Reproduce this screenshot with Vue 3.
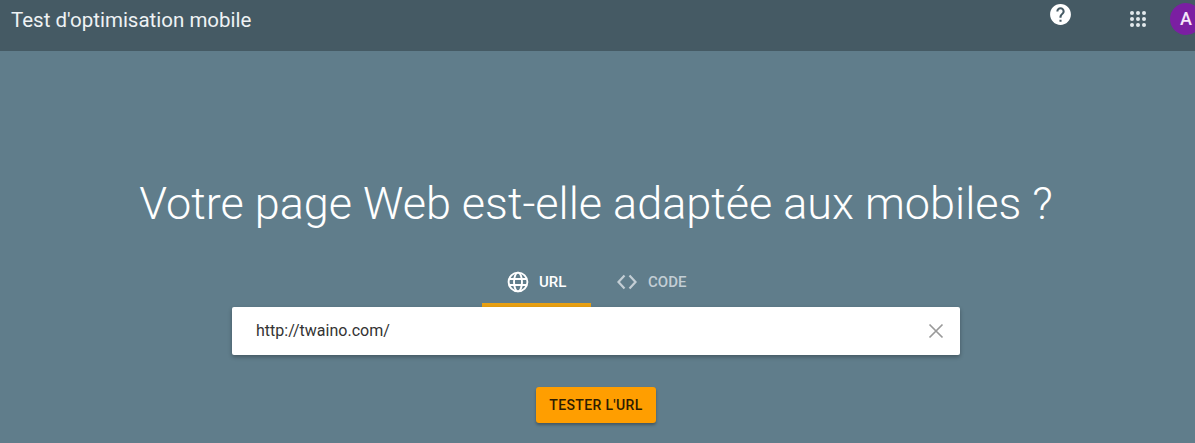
<template>
  <div class="page">
    <header class="topbar">
      <span class="app-title">Test d'optimisation mobile</span>
      <div class="topbar-actions">
        <svg class="help" width="25" height="25" viewBox="0 0 24 24">
          <path fill="#fff" d="M12 2C6.48 2 2 6.48 2 12s4.48 10 10 10 10-4.48 10-10S17.52 2 12 2zm1 17h-2v-2h2v2zm2.07-7.75l-.9.92C13.45 12.9 13 13.5 13 15h-2v-.5c0-1.1.45-2.1 1.17-2.83l1.24-1.26c.37-.36.59-.86.59-1.41 0-1.1-.9-2-2-2s-2 .9-2 2H8c0-2.21 1.79-4 4-4s4 1.79 4 4c0 .88-.36 1.68-.93 2.25z" />
        </svg>
        <div class="apps">
          <i v-for="n in 9" :key="n"></i>
        </div>
        <div class="avatar">A</div>
      </div>
    </header>

    <main class="hero">
      <h1>Votre page Web est-elle adaptée aux mobiles ?</h1>

      <div class="tabs">
        <div class="tab active">
          <svg width="24" height="24" viewBox="0 0 24 24" fill="none" stroke="#fff" stroke-width="1.9">
            <circle cx="12" cy="12" r="9.4" />
            <ellipse cx="12" cy="12" rx="4" ry="9.4" />
            <path d="M3.4 9h17.2M3.4 15h17.2" />
          </svg>
          <span>URL</span>
        </div>
        <div class="tab">
          <svg width="24" height="24" viewBox="0 0 24 24" fill="none" stroke="#c3ced5" stroke-width="2.2">
            <path d="M9.500 5.500 3.500 12l6 6.500M14.500 5.500l6 6.500-6 6.500" />
          </svg>
          <span>CODE</span>
        </div>
      </div>

      <div class="url-box">
        <span class="url">http://twaino.com/</span>
        <svg class="clear" width="16" height="16" viewBox="0 0 16 16" stroke="#9a9a9a" stroke-width="1.700">
          <path d="M1.500 1.500l13 13M14.500 1.500l-13 13" />
        </svg>
      </div>

      <button class="test-btn" type="button">TESTER L'URL</button>
    </main>
  </div>
</template>

<script setup>
</script>

<style>
  html, body {
    margin: 0;
    overflow: hidden;
  }
</style>

<style scoped>
  .page {
    width: 1195px;
    height: 443px;
    background: #607d8b;
    font-family: Roboto, "Liberation Sans", sans-serif;
    overflow: hidden;
  }

  .topbar {
    height: 51px;
    background: #455a64;
    display: flex;
    justify-content: space-between;
    box-sizing: border-box;
    padding-left: 11px;
    color: #fff;
  }

  .app-title {
    font-size: 20.5px;
    line-height: 24px;
    margin-top: 8px;
    color: #eef2f4;
  }

  .topbar-actions {
    display: flex;
    align-items: flex-start;
  }

  .help {
    margin-top: 2px;
  }

  .apps {
    display: grid;
    grid-template-columns: repeat(3, 4px);
    gap: 2px;
    margin: 11px 0 0 57px;
  }

  .apps i {
    display: block;
    width: 4px;
    height: 4px;
    border-radius: 50%;
    background: #e3e9ec;
  }

  .avatar {
    width: 32px;
    height: 32px;
    border-radius: 50%;
    background: #7b1fa2;
    color: #f5e6fa;
    font-size: 18px;
    font-weight: 500;
    line-height: 32px;
    text-align: center;
    margin: 3px -7px 0 24px;
  }

  .hero {
    width: 1192px;
    display: flex;
    flex-direction: column;
    align-items: center;
  }

  h1 {
    margin: 123px 0 0;
    font-size: 45px;
    line-height: 60px;
    font-weight: 300;
    color: #fff;
  }

  .tabs {
    display: flex;
    width: 228px;
    margin-top: 28px;
    height: 45px;
  }

  .tab {
    display: flex;
    align-items: center;
    gap: 9px;
    width: 109px;
    box-sizing: border-box;
    padding: 0 0 2px 24px;
    font-size: 15px;
    font-weight: 500;
    color: #c3ced5;
    border-bottom: 4px solid transparent;
  }

  .tab.active {
    color: #fff;
    border-bottom-color: #e8a013;
  }

  .url-box {
    width: 728px;
    height: 48px;
    box-sizing: border-box;
    background: #fff;
    border-radius: 2px;
    box-shadow: 0 2px 4px rgba(0, 0, 0, 0.3);
    display: flex;
    align-items: center;
    justify-content: space-between;
    padding: 0 16px 0 24px;
  }

  .url {
    font-size: 16px;
    color: #333;
    margin-bottom: 2px;
  }

  .test-btn {
    margin-top: 32px;
    width: 120px;
    height: 36px;
    border: none;
    border-radius: 3px;
    background: #ff9e00;
    color: #2e1c00;
    font-family: inherit;
    font-size: 14px;
    font-weight: 500;
    letter-spacing: 0.35px;
    box-shadow: 0 2px 3px rgba(0, 0, 0, 0.3);
    padding: 0;
  }
</style>
